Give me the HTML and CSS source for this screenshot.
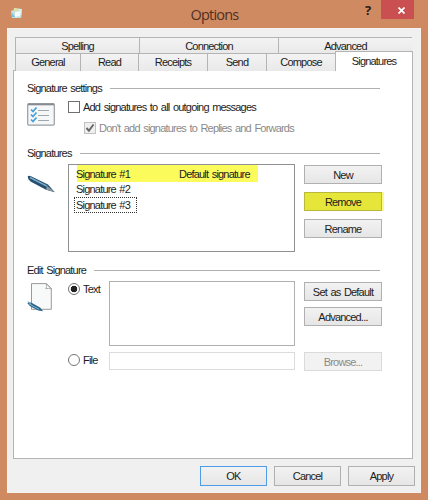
FILE: index.html
```html
<!DOCTYPE html>
<html lang="en">
<head>
    <meta charset="UTF-8">
    <meta name="viewport" content="width=device-width, initial-scale=1.0">
    <title>Options</title>
    <link rel="stylesheet" href="styles.css">
</head>
<body>

    <div class="window">
        <div class="titlebar">
            <svg class="app-icon" width="14" height="13" viewBox="0 0 14 13">
                <path d="M4 1l8 1-1 8-8-1z" fill="#d5efdf"/>
                <path d="M1 4l5-2 6 3-1 6-9 0z" fill="#bfe0df"/>
                <path d="M5 5l6-1-1 5-5 1z" fill="#f5fcfd"/>
                <path d="M4 2l4 0 0 2-4 0z" fill="#eadf85"/>
                <path d="M2 6l3 4-3 0z" fill="#79bfe0"/>
            </svg>
            <span class="title">Options</span>
            <span class="help">?</span>
            <span class="close">
                <svg width="7" height="7" viewBox="0 0 7 7"><path d="M.5.5l6 6M6.5.5l-6 6" stroke="#fff" stroke-width="1.7"/></svg>
            </span>
        </div>

        <div class="client">
            <div class="tabs tabs-back">
                <div class="tab">Spelling</div>
                <div class="tab">Connection</div>
                <div class="tab">Advanced</div>
            </div>
            <div class="tabs tabs-front">
                <div class="tab">General</div>
                <div class="tab">Read</div>
                <div class="tab">Receipts</div>
                <div class="tab">Send</div>
                <div class="tab">Compose</div>
                <div class="tab active">Signatures</div>
            </div>

            <div class="panel">
                <section class="settings">
                    <h2>Signature settings</h2>
                    <div class="row">
                        <svg class="icon icon-list" width="28" height="23" viewBox="0 0 28 23">
                            <rect x=".7" y=".7" width="26.6" height="21.4" rx="1" fill="#f5f7f8" stroke="#989da1" stroke-width="1.2"/>
                            <path d="M1 1.5h26" stroke="#858b90" stroke-width="1.6"/>
                            <path d="M11 7.5h11M11 12.5h11M11 17.5h11" stroke="#a2a7ab"/>
                            <path d="M4 6.5l2 2 3.5-4M4 11.5l2 2 3.5-4M4 16.5l2 2 3.5-4" fill="none" stroke="#46a0d4" stroke-width="1.7"/>
                        </svg>
                        <div class="checks">
                            <label><span class="checkbox"></span>Add signatures to all outgoing messages</label>
                            <label class="sub disabled">
                                <span class="checkbox"><svg width="10" height="10" viewBox="0 0 10 10"><path d="M1.5 5l2.4 2.7L8.5 1.5" fill="none" stroke="#666" stroke-width="1.9"/></svg></span>Don't add signatures to Replies and Forwards
                            </label>
                        </div>
                    </div>
                </section>

                <section class="signatures">
                    <h2>Signatures</h2>
                    <div class="row">
                        <svg class="icon icon-pen" width="29" height="19" viewBox="0 0 29 19">
                            <path d="M.7 1.2Q2 .2 4 1.3L21 9.5 27.8 17.3 19 14.8 3.5 6.5Q.5 4 .7 1.2z" fill="#254e70"/>
                            <path d="M3 2.5L20 11.2" stroke="#7badca" stroke-width="1.5"/>
                            <path d="M20 10.8l7.6 6.3-8.6-2.7z" fill="#8e999f"/>
                        </svg>
                        <div class="list">
                            <div class="item marked"><span>Signature #1</span><span>Default signature</span></div>
                            <div class="item"><span>Signature #2</span></div>
                            <div class="item"><span class="focused">Signature #3</span></div>
                        </div>
                        <div class="buttons">
                            <div class="btn">New</div>
                            <div class="btn highlight">Remove</div>
                            <div class="btn">Rename</div>
                        </div>
                    </div>
                </section>

                <section class="edit">
                    <h2>Edit Signature</h2>
                    <div class="row">
                        <svg class="icon icon-page" width="26" height="29" viewBox="0 0 26 29">
                            <path d="M4.5.6h15l4.8 5v20.7H4.5z" fill="#f8f9f9" stroke="#9a9a9a"/>
                            <path d="M19.3.8q1 3-.6 5 3-1 5.5 0z" fill="#fff" stroke="#999" stroke-width=".8"/>
                            <path d="M.3 20Q2 18.4 5 20l8 4.6 3.2 3.7-5-.8L2.8 23z" fill="#2b648a"/>
                            <path d="M2 20.8l10 5.5M1 18.3l3 3" stroke="#83b4d0"/>
                        </svg>
                        <div class="fields">
                            <div class="field">
                                <label><span class="radio on"></span>Text</label>
                                <div class="textarea"></div>
                            </div>
                            <div class="field">
                                <label><span class="radio"></span>File</label>
                                <div class="input"></div>
                            </div>
                        </div>
                        <div class="buttons">
                            <div class="btn">Set as Default</div>
                            <div class="btn">Advanced...</div>
                            <div class="btn disabled">Browse...</div>
                        </div>
                    </div>
                </section>
            </div>

            <div class="footer">
                <div class="btn default">OK</div>
                <div class="btn">Cancel</div>
                <div class="btn">Apply</div>
            </div>
        </div>
    </div>

</body>
</html>
```
FILE: styles.css
```css
* {
    box-sizing: border-box;
}
body {
    margin: 0;
    font-family: "Liberation Sans", Arial, sans-serif;
    font-size: 11px;
    letter-spacing: -0.8px;
    word-spacing: 1.2px;
    color: #1c1c1c;
    white-space: nowrap;
}
svg {
    display: block;
}
.window {
    width: 428px;
    height: 500px;
    padding: 0 7px 7px;
    background-color: #cf8a62;
}
.titlebar {
    display: grid;
    grid-template-columns: 30px 1fr 16px 33px 7px;
    height: 28px;
}
.app-icon {
    margin: 7px 0 0 3px;
}
.title {
    padding: 1px 0 0 27px;
    font-family: "Open Sans", sans-serif;
    font-size: 14.5px;
    line-height: 27px;
    letter-spacing: -0.8px;
    text-align: center;
    color: #50301f;
}
.help {
    font-family: "Open Sans", sans-serif;
    font-size: 13px;
    font-weight: bold;
    line-height: 20px;
    color: #2a1c14;
}
.close {
    display: flex;
    align-items: center;
    justify-content: center;
    height: 19px;
    padding-top: 2px;
    padding-left: 8px;
    background-color: #c94f50;
}
.client {
    height: 465px;
    padding: 8px 6px 0 5px;
    border: 1px solid #f7f3ef;
    background-color: #f0f0f0;
}
.tabs {
    display: grid;
    width: 397px;
    margin-left: 2px;
}
.tabs-back {
    grid-template-columns: 124px 139px 134px;
    height: 16px;
    border-top: 1px solid #b4b4b4;
    border-right: 1px solid #b4b4b4;
}
.tabs-front {
    grid-template-columns: 65px 58px 69px 59px 69px 78px;
    height: 17px;
}
.tab {
    padding-top: 1px;
    border-left: 1px solid #b4b4b4;
    background: linear-gradient(#f3f3f3, #e9e9e9);
    line-height: 14px;
    text-align: center;
}
.tabs-front .tab {
    border-top: 1px solid #b4b4b4;
}
.tabs-front .tab.active {
    position: relative;
    height: 20px;
    margin-top: -2px;
    border-right: 1px solid #b4b4b4;
    background: #fff;
    line-height: 17px;
}
.panel {
    width: 400px;
    height: 389px;
    padding: 10px 30px 0 13px;
    border: 1px solid #b4b4b4;
    background-color: #fff;
}
section {
    width: 355px;
}
.settings {
    height: 65px;
}
.signatures {
    height: 117px;
}
h2 {
    display: flex;
    align-items: center;
    gap: 8px;
    height: 14px;
    margin: 0;
    font-size: 11px;
    font-weight: normal;
}
h2::after {
    content: "";
    flex: 1;
    margin-right: 2px;
    border-top: 1px solid #b0b0b0;
}
.row {
    display: flex;
}
.icon {
    flex: none;
}
.checks {
    padding: 5px 0 0 13px;
}
label {
    display: flex;
    align-items: center;
    gap: 3px;
}
.checks label {
    height: 13px;
    margin-bottom: 8px;
}
.sub {
    padding-left: 16px;
}
.disabled {
    color: #8a8a8a;
}
.checkbox {
    width: 12px;
    height: 12px;
    border: 1px solid #6f6f6f;
    background-color: #fff;
}
.disabled .checkbox {
    border-color: #c2c2c2;
    background-color: #efefef;
}
.icon-list {
    margin-top: 8px;
}
.icon-pen {
    margin-top: 15px;
}
.icon-page {
    margin-top: 6px;
}
.list {
    width: 227px;
    height: 88px;
    margin: 4px 9px 0 12px;
    border: 1px solid #8f9094;
}
.item {
    display: flex;
    height: 15px;
    padding-left: 7px;
    line-height: 15px;
}
.item.marked {
    width: 181px;
    height: 17px;
    margin-left: 8px;
    padding-left: 0;
    background-color: #fbfb5c;
    line-height: 18px;
}
.marked span:first-child {
    width: 103px;
    margin-left: -1px;
}
.item .focused {
    width: 63px;
    height: 16px;
    margin-left: -2px;
    padding-left: 1px;
    border: 1px dotted #333;
}
.btn {
    width: 78px;
    height: 19px;
    border: 1px solid #b0b0b0;
    background: linear-gradient(#f2f2f2, #e6e6e6);
    line-height: 18px;
    text-align: center;
}
.btn.highlight {
    border-color: #b9b83c;
    background: #e6e63a;
    box-shadow: 2px 0 #fbfb83;
}
.btn.disabled {
    border-color: #dadada;
    background: #f2f2f2;
}
.signatures .buttons {
    display: grid;
    gap: 8px;
    align-content: start;
    padding-top: 5px;
}
.fields {
    padding: 4px 9px 0 15px;
}
.field {
    display: flex;
    margin-bottom: 6px;
}
.field label {
    width: 41px;
    height: 15px;
}
.radio {
    width: 12px;
    height: 12px;
    border: 1px solid #747474;
    border-radius: 50%;
    background-color: #fff;
}
.radio.on {
    background: radial-gradient(circle, #222 3px, #fff 3.6px);
}
.textarea {
    width: 186px;
    height: 65px;
    border: 1px solid #b0b0b0;
}
.input {
    width: 186px;
    height: 18px;
    border: 1px solid #dcdcdc;
}
.edit .buttons {
    padding-top: 5px;
}
.edit .btn {
    margin-bottom: 6px;
}
.edit .btn.disabled {
    margin-top: 26px;
}
.footer {
    display: flex;
    justify-content: flex-end;
    gap: 7px;
    margin: 7px -1px 0 0;
}
.footer .btn {
    width: 67px;
    height: 20px;
}
.btn.default {
    border-color: #4f9be6;
}
```
